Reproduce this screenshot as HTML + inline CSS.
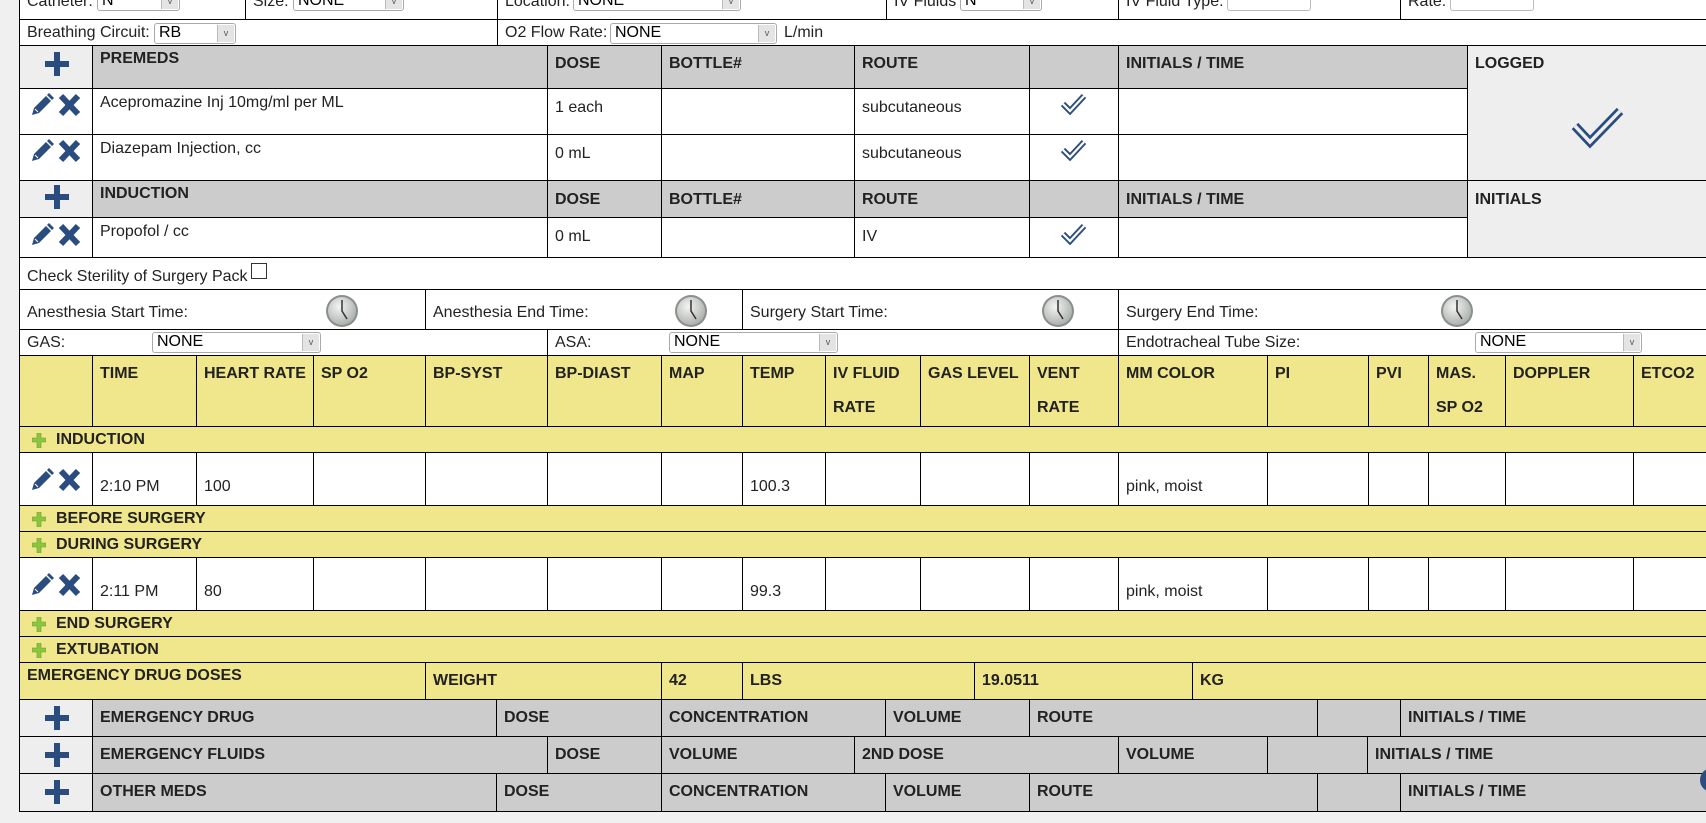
<!DOCTYPE html>
<html><head><meta charset="utf-8">
<style>
html,body{margin:0;padding:0}
body{width:1706px;height:823px;position:relative;overflow:hidden;background:#f0f0f0;font-family:"Liberation Sans",Arial,sans-serif;color:#222;font-size:16px}
.c{position:absolute;box-sizing:border-box;border-left:1px solid #000;border-bottom:1px solid #000;padding-left:7px;white-space:nowrap;overflow:hidden;line-height:18px;background:#fff}
.h{background:#ccc;font-weight:bold}
.y{background:#f0e68c}
.g{background:#eee}
.b{font-weight:bold}
.sel{position:absolute;box-sizing:border-box;border:1px solid #aaa;border-radius:3px;background:#fff;font-size:16px;line-height:18px;padding-left:4px;color:#000}
.sel:after{content:"v";position:absolute;right:1px;top:1px;bottom:1px;width:16px;background:#e4e4e4;border-left:1px solid #bbb;font-size:9px;text-align:center;line-height:17px;color:#555}
.inp{position:absolute;box-sizing:border-box;border:1px solid #bbb;border-radius:3px;background:#fff}
.t{position:absolute;white-space:nowrap;line-height:18px}
svg{position:absolute}
</style></head><body>

<div class="c" style="left:19px;top:-10px;width:226px;height:30px"></div>
<div class="c" style="left:245px;top:-10px;width:252px;height:30px"></div>
<div class="c" style="left:497px;top:-10px;width:389px;height:30px"></div>
<div class="c" style="left:886px;top:-10px;width:232px;height:30px"></div>
<div class="c" style="left:1118px;top:-10px;width:282px;height:30px"></div>
<div class="c" style="left:1400px;top:-10px;width:320px;height:30px"></div>
<div class="t" style="left:27px;top:-7px">Catheter:</div>
<div class="sel" style="left:97px;top:-9px;width:83px;height:20px">N</div>
<div class="t" style="left:253px;top:-7px">Size:</div>
<div class="sel" style="left:293px;top:-9px;width:111px;height:20px">NONE</div>
<div class="t" style="left:505px;top:-7px">Location:</div>
<div class="sel" style="left:573px;top:-9px;width:168px;height:20px">NONE</div>
<div class="t" style="left:894px;top:-7px">IV Fluids</div>
<div class="sel" style="left:960px;top:-9px;width:82px;height:20px">N</div>
<div class="t" style="left:1126px;top:-7px">IV Fluid Type:</div>
<div class="inp" style="left:1227px;top:-9px;width:84px;height:20px"></div>
<div class="t" style="left:1408px;top:-7px">Rate:</div>
<div class="inp" style="left:1450px;top:-9px;width:84px;height:20px"></div>

<div class="c" style="left:19px;top:20px;width:478px;height:26px"></div>
<div class="c" style="left:497px;top:20px;width:1223px;height:26px"></div>
<div class="t" style="left:27px;top:24px">Breathing Circuit:</div>
<div class="sel" style="left:154px;top:23px;width:82px;height:21px">RB</div>
<div class="t" style="left:505px;top:24px">O2 Flow Rate:</div>
<div class="sel" style="left:610px;top:23px;width:167px;height:21px">NONE</div>
<div class="t" style="left:784px;top:24px">L/min</div>

<div class="c g" style="left:19px;top:46px;width:74px;height:43px"></div>
<div class="c h" style="left:92px;top:46px;width:455px;height:43px;padding-top:4px">PREMEDS</div>
<div class="c h" style="left:547px;top:46px;width:114px;height:43px;padding-top:9px">DOSE</div>
<div class="c h" style="left:661px;top:46px;width:193px;height:43px;padding-top:9px">BOTTLE#</div>
<div class="c h" style="left:854px;top:46px;width:175px;height:43px;padding-top:9px">ROUTE</div>
<div class="c h" style="left:1029px;top:46px;width:90px;height:43px"></div>
<div class="c h" style="left:1118px;top:46px;width:349px;height:43px;padding-top:9px">INITIALS / TIME</div>
<div class="c g b" style="left:1467px;top:46px;width:253px;height:135px;padding-top:9px">LOGGED</div>
<svg style="left:1570px;top:104px" width="56" height="46" viewBox="0 0 56 46"><polyline points="5,22 20,38 50,7" fill="none" stroke="#2b4c7e" stroke-width="9"/><polyline points="5,22 20,38 50,7" fill="none" stroke="#eee" stroke-width="3.5"/></svg>

<div class="c" style="left:19px;top:89px;width:74px;height:46px"></div>
<div class="c" style="left:92px;top:89px;width:455px;height:46px;padding-top:5px">Acepromazine Inj 10mg/ml per ML</div>
<div class="c" style="left:547px;top:89px;width:114px;height:46px;padding-top:10px">1 each</div>
<div class="c" style="left:661px;top:89px;width:193px;height:46px"></div>
<div class="c" style="left:854px;top:89px;width:175px;height:46px;padding-top:10px">subcutaneous</div>
<div class="c" style="left:1029px;top:89px;width:90px;height:46px"></div>
<div class="c" style="left:1118px;top:89px;width:349px;height:46px"></div>

<div class="c" style="left:19px;top:135px;width:74px;height:46px"></div>
<div class="c" style="left:92px;top:135px;width:455px;height:46px;padding-top:5px">Diazepam Injection, cc</div>
<div class="c" style="left:547px;top:135px;width:114px;height:46px;padding-top:10px">0 mL</div>
<div class="c" style="left:661px;top:135px;width:193px;height:46px"></div>
<div class="c" style="left:854px;top:135px;width:175px;height:46px;padding-top:10px">subcutaneous</div>
<div class="c" style="left:1029px;top:135px;width:90px;height:46px"></div>
<div class="c" style="left:1118px;top:135px;width:349px;height:46px"></div>

<div class="c g" style="left:19px;top:181px;width:74px;height:37px"></div>
<div class="c h" style="left:92px;top:181px;width:455px;height:37px;padding-top:4px">INDUCTION</div>
<div class="c h" style="left:547px;top:181px;width:114px;height:37px;padding-top:10px">DOSE</div>
<div class="c h" style="left:661px;top:181px;width:193px;height:37px;padding-top:10px">BOTTLE#</div>
<div class="c h" style="left:854px;top:181px;width:175px;height:37px;padding-top:10px">ROUTE</div>
<div class="c h" style="left:1029px;top:181px;width:90px;height:37px"></div>
<div class="c h" style="left:1118px;top:181px;width:349px;height:37px;padding-top:10px">INITIALS / TIME</div>
<div class="c g b" style="left:1467px;top:181px;width:253px;height:77px;padding-top:10px">INITIALS</div>

<div class="c" style="left:19px;top:218px;width:74px;height:40px"></div>
<div class="c" style="left:92px;top:218px;width:455px;height:40px;padding-top:5px">Propofol / cc</div>
<div class="c" style="left:547px;top:218px;width:114px;height:40px;padding-top:10px">0 mL</div>
<div class="c" style="left:661px;top:218px;width:193px;height:40px"></div>
<div class="c" style="left:854px;top:218px;width:175px;height:40px;padding-top:10px">IV</div>
<div class="c" style="left:1029px;top:218px;width:90px;height:40px"></div>
<div class="c" style="left:1118px;top:218px;width:349px;height:40px"></div>

<svg style="left:45px;top:52px" width="24" height="24" viewBox="0 0 24 24"><path d="M9 0h6v9h9v6h-9v9h-6v-9h-9v-6h9z" fill="#2b4c7e"/></svg>
<svg style="left:45px;top:185px" width="24" height="24" viewBox="0 0 24 24"><path d="M9 0h6v9h9v6h-9v9h-6v-9h-9v-6h9z" fill="#2b4c7e"/></svg>

<svg style="left:1060px;top:93px" width="28" height="22" viewBox="0 0 28 22"><polyline points="3,11 10,18 24,3" fill="none" stroke="#2b4c7e" stroke-width="6"/><polyline points="3,11 10,18 24,3" fill="none" stroke="#fff" stroke-width="2.2"/></svg>
<svg style="left:1060px;top:139px" width="28" height="22" viewBox="0 0 28 22"><polyline points="3,11 10,18 24,3" fill="none" stroke="#2b4c7e" stroke-width="6"/><polyline points="3,11 10,18 24,3" fill="none" stroke="#fff" stroke-width="2.2"/></svg>
<svg style="left:1060px;top:223px" width="28" height="22" viewBox="0 0 28 22"><polyline points="3,11 10,18 24,3" fill="none" stroke="#2b4c7e" stroke-width="6"/><polyline points="3,11 10,18 24,3" fill="none" stroke="#fff" stroke-width="2.2"/></svg>

<div class="c" style="left:19px;top:258px;width:1701px;height:32px;padding-top:10px">Check Sterility of Surgery Pack</div>
<div style="position:absolute;left:251px;top:263px;width:14px;height:14px;border:1px solid #333;background:#fff"></div>

<div class="c" style="left:19px;top:290px;width:407px;height:40px;padding-top:14px">Anesthesia Start Time:</div>
<div class="c" style="left:425px;top:290px;width:318px;height:40px;padding-top:14px">Anesthesia End Time:</div>
<div class="c" style="left:742px;top:290px;width:377px;height:40px;padding-top:14px">Surgery Start Time:</div>
<div class="c" style="left:1118px;top:290px;width:602px;height:40px;padding-top:14px">Surgery End Time:</div>
<svg style="left:325px;top:294px" width="34" height="34" viewBox="0 0 34 34"><defs><radialGradient id="cg" cx="40%" cy="35%" r="70%"><stop offset="0" stop-color="#f4f4f4"/><stop offset="1" stop-color="#a9aeaa"/></radialGradient></defs><circle cx="17" cy="17" r="16" fill="#8a8f8b"/><circle cx="17" cy="17" r="14" fill="url(#cg)"/><path d="M17 6v11l5 8" stroke="#333" stroke-width="1.5" fill="none"/></svg>
<svg style="left:674px;top:294px" width="34" height="34" viewBox="0 0 34 34"><circle cx="17" cy="17" r="16" fill="#8a8f8b"/><circle cx="17" cy="17" r="14" fill="url(#cg)"/><path d="M17 6v11l5 8" stroke="#333" stroke-width="1.5" fill="none"/></svg>
<svg style="left:1041px;top:294px" width="34" height="34" viewBox="0 0 34 34"><circle cx="17" cy="17" r="16" fill="#8a8f8b"/><circle cx="17" cy="17" r="14" fill="url(#cg)"/><path d="M17 6v11l5 8" stroke="#333" stroke-width="1.5" fill="none"/></svg>
<svg style="left:1440px;top:294px" width="34" height="34" viewBox="0 0 34 34"><circle cx="17" cy="17" r="16" fill="#8a8f8b"/><circle cx="17" cy="17" r="14" fill="url(#cg)"/><path d="M17 6v11l5 8" stroke="#333" stroke-width="1.5" fill="none"/></svg>

<div class="c" style="left:19px;top:330px;width:126px;height:26px;padding-top:4px">GAS:</div>
<div class="c" style="left:144px;top:330px;width:404px;height:26px;border-left:none"></div>
<div class="c" style="left:547px;top:330px;width:572px;height:26px;padding-top:4px">ASA:</div>
<div class="c" style="left:1118px;top:330px;width:602px;height:26px;padding-top:4px">Endotracheal Tube Size:</div>
<div class="sel" style="left:152px;top:332px;width:169px;height:21px">NONE</div>
<div class="sel" style="left:669px;top:332px;width:169px;height:21px">NONE</div>
<div class="sel" style="left:1475px;top:332px;width:167px;height:21px">NONE</div>

<div class="c y b" style="left:19px;top:356px;width:74px;height:71px"></div>
<div class="c y b" style="left:92px;top:356px;width:105px;height:71px;line-height:34px;padding-top:1px">TIME</div>
<div class="c y b" style="left:196px;top:356px;width:117px;height:71px;line-height:34px;padding-top:1px">HEART RATE</div>
<div class="c y b" style="left:313px;top:356px;width:113px;height:71px;line-height:34px;padding-top:1px">SP O2</div>
<div class="c y b" style="left:425px;top:356px;width:123px;height:71px;line-height:34px;padding-top:1px">BP-SYST</div>
<div class="c y b" style="left:547px;top:356px;width:115px;height:71px;line-height:34px;padding-top:1px">BP-DIAST</div>
<div class="c y b" style="left:661px;top:356px;width:82px;height:71px;line-height:34px;padding-top:1px">MAP</div>
<div class="c y b" style="left:742px;top:356px;width:84px;height:71px;line-height:34px;padding-top:1px">TEMP</div>
<div class="c y b" style="left:825px;top:356px;width:96px;height:71px;line-height:34px;padding-top:1px">IV FLUID<br>RATE</div>
<div class="c y b" style="left:920px;top:356px;width:110px;height:71px;line-height:34px;padding-top:1px">GAS LEVEL</div>
<div class="c y b" style="left:1029px;top:356px;width:90px;height:71px;line-height:34px;padding-top:1px">VENT<br>RATE</div>
<div class="c y b" style="left:1118px;top:356px;width:150px;height:71px;line-height:34px;padding-top:1px">MM COLOR</div>
<div class="c y b" style="left:1267px;top:356px;width:102px;height:71px;line-height:34px;padding-top:1px">PI</div>
<div class="c y b" style="left:1368px;top:356px;width:61px;height:71px;line-height:34px;padding-top:1px">PVI</div>
<div class="c y b" style="left:1428px;top:356px;width:78px;height:71px;line-height:34px;padding-top:1px">MAS.<br>SP O2</div>
<div class="c y b" style="left:1505px;top:356px;width:129px;height:71px;line-height:34px;padding-top:1px">DOPPLER</div>
<div class="c y b" style="left:1633px;top:356px;width:87px;height:71px;line-height:34px;padding-top:1px">ETCO2</div>

<div class="c y b" style="left:19px;top:427px;width:1701px;height:26px;line-height:25px;padding-left:36px">INDUCTION</div>
<div class="c y b" style="left:19px;top:506px;width:1701px;height:26px;line-height:25px;padding-left:36px">BEFORE SURGERY</div>
<div class="c y b" style="left:19px;top:532px;width:1701px;height:26px;line-height:25px;padding-left:36px">DURING SURGERY</div>
<div class="c y b" style="left:19px;top:611px;width:1701px;height:26px;line-height:25px;padding-left:36px">END SURGERY</div>
<div class="c y b" style="left:19px;top:637px;width:1701px;height:26px;line-height:25px;padding-left:36px">EXTUBATION</div>
<svg style="left:32px;top:433px" width="14" height="15" viewBox="0 0 14 15"><path d="M5 0h4v5h5v4h-5v6h-4v-6h-5v-4h5z" fill="#8cc63f" stroke="#6a9e2a" stroke-width=".6"/></svg>
<svg style="left:32px;top:512px" width="14" height="15" viewBox="0 0 14 15"><path d="M5 0h4v5h5v4h-5v6h-4v-6h-5v-4h5z" fill="#8cc63f" stroke="#6a9e2a" stroke-width=".6"/></svg>
<svg style="left:32px;top:538px" width="14" height="15" viewBox="0 0 14 15"><path d="M5 0h4v5h5v4h-5v6h-4v-6h-5v-4h5z" fill="#8cc63f" stroke="#6a9e2a" stroke-width=".6"/></svg>
<svg style="left:32px;top:617px" width="14" height="15" viewBox="0 0 14 15"><path d="M5 0h4v5h5v4h-5v6h-4v-6h-5v-4h5z" fill="#8cc63f" stroke="#6a9e2a" stroke-width=".6"/></svg>
<svg style="left:32px;top:643px" width="14" height="15" viewBox="0 0 14 15"><path d="M5 0h4v5h5v4h-5v6h-4v-6h-5v-4h5z" fill="#8cc63f" stroke="#6a9e2a" stroke-width=".6"/></svg>

<div class="c" style="left:19px;top:453px;width:74px;height:53px"></div>
<div class="c" style="left:92px;top:453px;width:105px;height:53px;padding-top:25px">2:10 PM</div>
<div class="c" style="left:196px;top:453px;width:117px;height:53px;padding-top:25px">100</div>
<div class="c" style="left:313px;top:453px;width:113px;height:53px"></div>
<div class="c" style="left:425px;top:453px;width:123px;height:53px"></div>
<div class="c" style="left:547px;top:453px;width:115px;height:53px"></div>
<div class="c" style="left:661px;top:453px;width:82px;height:53px"></div>
<div class="c" style="left:742px;top:453px;width:84px;height:53px;padding-top:25px">100.3</div>
<div class="c" style="left:825px;top:453px;width:96px;height:53px"></div>
<div class="c" style="left:920px;top:453px;width:110px;height:53px"></div>
<div class="c" style="left:1029px;top:453px;width:90px;height:53px"></div>
<div class="c" style="left:1118px;top:453px;width:150px;height:53px;padding-top:25px">pink, moist</div>
<div class="c" style="left:1267px;top:453px;width:102px;height:53px"></div>
<div class="c" style="left:1368px;top:453px;width:61px;height:53px"></div>
<div class="c" style="left:1428px;top:453px;width:78px;height:53px"></div>
<div class="c" style="left:1505px;top:453px;width:129px;height:53px"></div>
<div class="c" style="left:1633px;top:453px;width:87px;height:53px"></div>

<div class="c" style="left:19px;top:558px;width:74px;height:53px"></div>
<div class="c" style="left:92px;top:558px;width:105px;height:53px;padding-top:25px">2:11 PM</div>
<div class="c" style="left:196px;top:558px;width:117px;height:53px;padding-top:25px">80</div>
<div class="c" style="left:313px;top:558px;width:113px;height:53px"></div>
<div class="c" style="left:425px;top:558px;width:123px;height:53px"></div>
<div class="c" style="left:547px;top:558px;width:115px;height:53px"></div>
<div class="c" style="left:661px;top:558px;width:82px;height:53px"></div>
<div class="c" style="left:742px;top:558px;width:84px;height:53px;padding-top:25px">99.3</div>
<div class="c" style="left:825px;top:558px;width:96px;height:53px"></div>
<div class="c" style="left:920px;top:558px;width:110px;height:53px"></div>
<div class="c" style="left:1029px;top:558px;width:90px;height:53px"></div>
<div class="c" style="left:1118px;top:558px;width:150px;height:53px;padding-top:25px">pink, moist</div>
<div class="c" style="left:1267px;top:558px;width:102px;height:53px"></div>
<div class="c" style="left:1368px;top:558px;width:61px;height:53px"></div>
<div class="c" style="left:1428px;top:558px;width:78px;height:53px"></div>
<div class="c" style="left:1505px;top:558px;width:129px;height:53px"></div>
<div class="c" style="left:1633px;top:558px;width:87px;height:53px"></div>

<svg style="left:30px;top:93px" width="54" height="24" viewBox="0 0 54 24"><path d="M2 22l2-7L16 3l5 5L9 20z" fill="#2b4c7e"/><path d="M17 2l2-2 5 5-2 2z" fill="#2b4c7e"/><path d="M5 16l3 3" stroke="#fff" stroke-width="1"/><path d="M31 3l17 18M48 3L31 21" stroke="#2b4c7e" stroke-width="6"/></svg>
<svg style="left:30px;top:139px" width="54" height="24" viewBox="0 0 54 24"><path d="M2 22l2-7L16 3l5 5L9 20z" fill="#2b4c7e"/><path d="M17 2l2-2 5 5-2 2z" fill="#2b4c7e"/><path d="M5 16l3 3" stroke="#fff" stroke-width="1"/><path d="M31 3l17 18M48 3L31 21" stroke="#2b4c7e" stroke-width="6"/></svg>
<svg style="left:30px;top:223px" width="54" height="24" viewBox="0 0 54 24"><path d="M2 22l2-7L16 3l5 5L9 20z" fill="#2b4c7e"/><path d="M17 2l2-2 5 5-2 2z" fill="#2b4c7e"/><path d="M5 16l3 3" stroke="#fff" stroke-width="1"/><path d="M31 3l17 18M48 3L31 21" stroke="#2b4c7e" stroke-width="6"/></svg>
<svg style="left:30px;top:468px" width="54" height="24" viewBox="0 0 54 24"><path d="M2 22l2-7L16 3l5 5L9 20z" fill="#2b4c7e"/><path d="M17 2l2-2 5 5-2 2z" fill="#2b4c7e"/><path d="M5 16l3 3" stroke="#fff" stroke-width="1"/><path d="M31 3l17 18M48 3L31 21" stroke="#2b4c7e" stroke-width="6"/></svg>
<svg style="left:30px;top:573px" width="54" height="24" viewBox="0 0 54 24"><path d="M2 22l2-7L16 3l5 5L9 20z" fill="#2b4c7e"/><path d="M17 2l2-2 5 5-2 2z" fill="#2b4c7e"/><path d="M5 16l3 3" stroke="#fff" stroke-width="1"/><path d="M31 3l17 18M48 3L31 21" stroke="#2b4c7e" stroke-width="6"/></svg>

<div class="c y b" style="left:19px;top:663px;width:407px;height:37px;padding-top:4px">EMERGENCY DRUG DOSES</div>
<div class="c y b" style="left:425px;top:663px;width:237px;height:37px;padding-top:9px">WEIGHT</div>
<div class="c y b" style="left:661px;top:663px;width:82px;height:37px;padding-top:9px">42</div>
<div class="c y b" style="left:742px;top:663px;width:233px;height:37px;padding-top:9px">LBS</div>
<div class="c y b" style="left:974px;top:663px;width:219px;height:37px;padding-top:9px">19.0511</div>
<div class="c y b" style="left:1192px;top:663px;width:528px;height:37px;padding-top:9px">KG</div>

<div class="c g" style="left:19px;top:700px;width:74px;height:37px"></div>
<div class="c h" style="left:92px;top:700px;width:405px;height:37px;padding-top:9px">EMERGENCY DRUG</div>
<div class="c h" style="left:496px;top:700px;width:166px;height:37px;padding-top:9px">DOSE</div>
<div class="c h" style="left:661px;top:700px;width:225px;height:37px;padding-top:9px">CONCENTRATION</div>
<div class="c h" style="left:885px;top:700px;width:144px;height:37px;padding-top:9px">VOLUME</div>
<div class="c h" style="left:1029px;top:700px;width:289px;height:37px;padding-top:9px">ROUTE</div>
<div class="c h" style="left:1317px;top:700px;width:84px;height:37px"></div>
<div class="c h" style="left:1400px;top:700px;width:320px;height:37px;padding-top:9px">INITIALS / TIME</div>

<div class="c g" style="left:19px;top:737px;width:74px;height:37px"></div>
<div class="c h" style="left:92px;top:737px;width:456px;height:37px;padding-top:9px">EMERGENCY FLUIDS</div>
<div class="c h" style="left:547px;top:737px;width:115px;height:37px;padding-top:9px">DOSE</div>
<div class="c h" style="left:661px;top:737px;width:194px;height:37px;padding-top:9px">VOLUME</div>
<div class="c h" style="left:854px;top:737px;width:265px;height:37px;padding-top:9px">2ND DOSE</div>
<div class="c h" style="left:1118px;top:737px;width:150px;height:37px;padding-top:9px">VOLUME</div>
<div class="c h" style="left:1267px;top:737px;width:101px;height:37px"></div>
<div class="c h" style="left:1367px;top:737px;width:353px;height:37px;padding-top:9px">INITIALS / TIME</div>

<div class="c g" style="left:19px;top:774px;width:74px;height:38px"></div>
<div class="c h" style="left:92px;top:774px;width:405px;height:38px;padding-top:9px">OTHER MEDS</div>
<div class="c h" style="left:496px;top:774px;width:166px;height:38px;padding-top:9px">DOSE</div>
<div class="c h" style="left:661px;top:774px;width:225px;height:38px;padding-top:9px">CONCENTRATION</div>
<div class="c h" style="left:885px;top:774px;width:144px;height:38px;padding-top:9px">VOLUME</div>
<div class="c h" style="left:1029px;top:774px;width:289px;height:38px;padding-top:9px">ROUTE</div>
<div class="c h" style="left:1317px;top:774px;width:84px;height:38px"></div>
<div class="c h" style="left:1400px;top:774px;width:320px;height:38px;padding-top:9px">INITIALS / TIME</div>

<svg style="left:45px;top:706px" width="24" height="24" viewBox="0 0 24 24"><path d="M9 0h6v9h9v6h-9v9h-6v-9h-9v-6h9z" fill="#2b4c7e"/></svg>
<svg style="left:45px;top:743px" width="24" height="24" viewBox="0 0 24 24"><path d="M9 0h6v9h9v6h-9v9h-6v-9h-9v-6h9z" fill="#2b4c7e"/></svg>
<svg style="left:45px;top:780px" width="24" height="24" viewBox="0 0 24 24"><path d="M9 0h6v9h9v6h-9v9h-6v-9h-9v-6h9z" fill="#2b4c7e"/></svg>

<div style="position:absolute;left:1700px;top:768px;width:24px;height:24px;border-radius:50%;background:#2b4c7e"></div>
</body></html>
